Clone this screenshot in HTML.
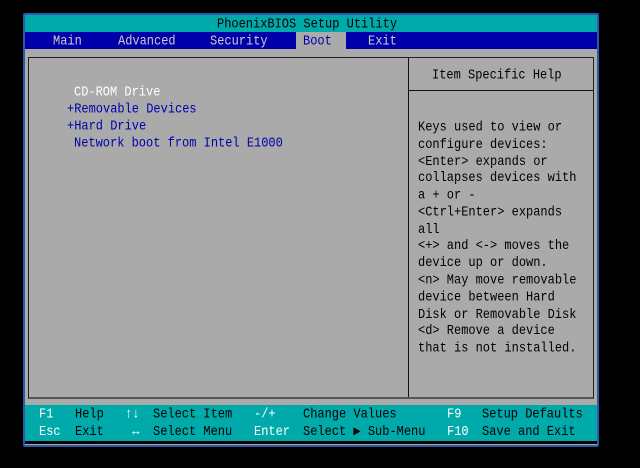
<!DOCTYPE html>
<html><head><style>
body{margin:0;width:640px;height:468px;background:#000;position:relative;overflow:hidden;font-family:"Liberation Mono",monospace;font-size:12px;}
div,span{position:absolute;}
.t{white-space:pre;line-height:14px;transform:scaleY(1.15);transform-origin:0 0;}
.m{line-height:14.78px;}
</style></head><body>
<div style="left:23px;top:13px;width:572px;height:430px;border:2px solid #2a5aa8;border-radius:2px;background:#aaaaaa;"></div>
<div style="left:25px;top:15px;width:572px;height:17px;background:#00aaaa;"></div>
<div style="left:25px;top:32px;width:572px;height:17px;background:#0000aa;"></div>
<div style="left:296px;top:32px;width:50px;height:17px;background:#aaaaaa;"></div>
<div class="t" style="left:217px;top:16px;color:#000;">PhoenixBIOS Setup Utility</div>
<div class="t" style="left:53px;top:33px;color:#ccc;">Main</div>
<div class="t" style="left:118px;top:33px;color:#ccc;">Advanced</div>
<div class="t" style="left:210px;top:33px;color:#ccc;">Security</div>
<div class="t" style="left:303px;top:33px;color:#0000aa;">Boot</div>
<div class="t" style="left:368px;top:33px;color:#ccc;">Exit</div>
<div style="left:28px;top:57px;width:564px;height:339px;border:1px solid #222;border-bottom:2px solid #555;"></div>
<div style="left:408px;top:57px;width:1px;height:340px;background:#111;"></div>
<div style="left:408px;top:90px;width:185px;height:1px;background:#111;"></div>
<div class="t" style="left:432px;top:67px;color:#000;">Item Specific Help</div>
<div class="t" style="left:74px;top:84px;color:#fff;">CD-ROM Drive</div>
<div class="t" style="left:67px;top:101px;color:#0000aa;">+Removable Devices</div>
<div class="t" style="left:67px;top:118px;color:#0000aa;">+Hard Drive</div>
<div class="t" style="left:74px;top:135px;color:#0000aa;">Network boot from Intel E1000</div>
<div class="t m" style="left:418px;top:119px;color:#000;">Keys used to view or
configure devices:
&lt;Enter&gt; expands or
collapses devices with
a + or -
&lt;Ctrl+Enter&gt; expands
all
&lt;+&gt; and &lt;-&gt; moves the
device up or down.
&lt;n&gt; May move removable
device between Hard
Disk or Removable Disk
&lt;d&gt; Remove a device
that is not installed.</div>
<div style="left:25px;top:405px;width:572px;height:36px;background:#00aaaa;"></div>
<div style="left:25px;top:441px;width:572px;height:3px;background:#000;"></div>
<div class="t m" style="left:39px;top:406px;color:#fff;">F1
Esc</div>
<div class="t m" style="left:75px;top:406px;color:#000;">Help
Exit</div>
<div class="t m" style="left:125px;top:406px;color:#fff;">↑↓
 ↔</div>
<div class="t m" style="left:153px;top:406px;color:#000;">Select Item
Select Menu</div>
<div class="t m" style="left:254px;top:406px;color:#fff;">-/+
Enter</div>
<div class="t m" style="left:303px;top:406px;color:#000;">Change Values
Select ▶ Sub-Menu</div>
<div class="t m" style="left:447px;top:406px;color:#fff;">F9
F10</div>
<div class="t m" style="left:482px;top:406px;color:#000;">Setup Defaults
Save and Exit</div>
</body></html>
